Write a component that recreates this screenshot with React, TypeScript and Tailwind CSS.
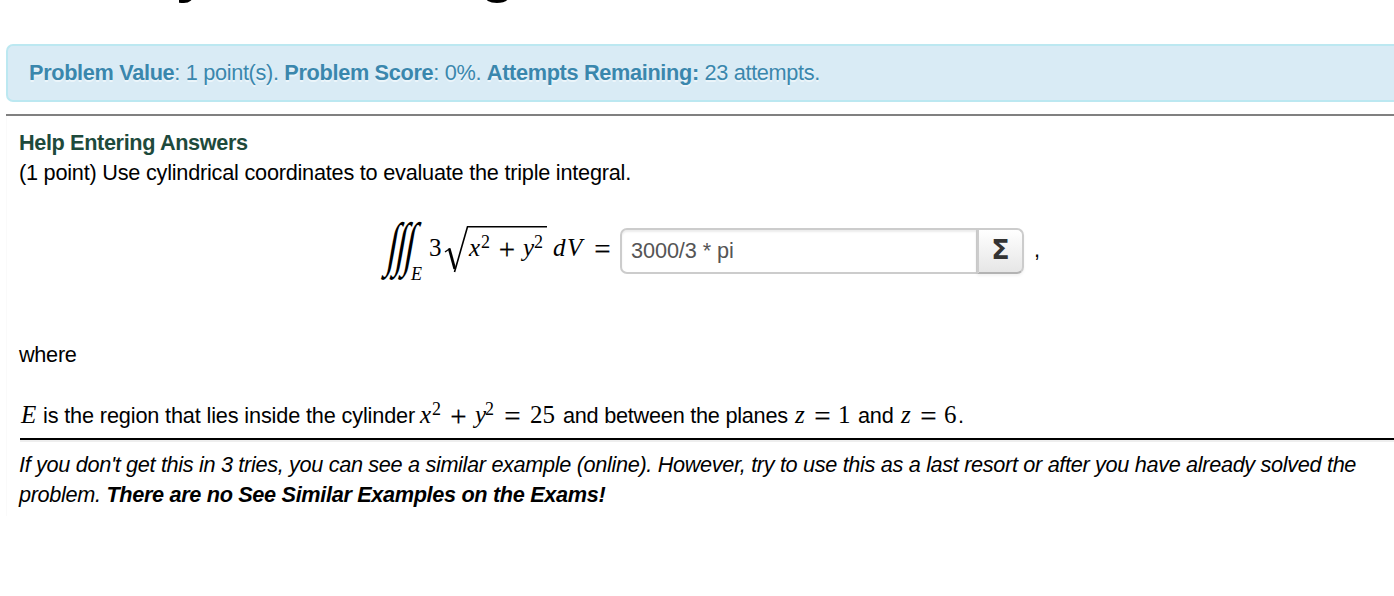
import type { ReactNode } from 'react'

interface MathProps {
    className?: string
    children: ReactNode
}

function Var({ className = '', children }: MathProps) {
    return <span className={`inline-block font-['Liberation_Serif',serif] text-[25px] italic ${className}`}>{children}</span>
}

function Num({ className = '', children }: MathProps) {
    return <span className={`inline-block font-['Liberation_Serif',serif] text-[25px] ${className}`}>{children}</span>
}

function Op({ className = '', children }: MathProps) {
    return <span className={`relative top-[3px] inline-block text-center font-['Liberation_Serif',serif] text-[29px] [-webkit-text-stroke:0.2px_black] ${className}`}>{children}</span>
}

function Sup({ children }: { children: ReactNode }) {
    return <span className="relative -top-[8px] inline-block w-[10px] font-['Liberation_Serif',serif] text-[18px]">{children}</span>
}

function TripleIntegral() {
    return (
        <div className="relative h-[60px] w-[48px]">
            <div className="flex h-[60px] origin-bottom-left [transform:translate(2px,-1px)_skewX(-10deg)_scale(0.7,1.14)] font-['Liberation_Serif',serif] text-[52px] leading-[60px]">
                <span className="w-[12px]">∫</span>
                <span className="w-[12px]">∫</span>
                <span className="w-[12px]">∫</span>
            </div>
            <span className="absolute top-[45px] left-[30px] font-['Liberation_Serif',serif] text-[18px] leading-none italic">E</span>
        </div>
    )
}

function Radical() {
    return (
        <svg className="absolute top-0 left-0" width="103" height="54" viewBox="0 0 103 54" fill="none" stroke="black">
            <path d="M1 32L6 28.5" strokeWidth="1.3" />
            <path d="M5.2 28.5L10.8 49" strokeWidth="2.8" />
            <path d="M10.5 52L23.5 6.8H103" strokeWidth="1.6" />
        </svg>
    )
}

function AnswerInput() {
    return (
        <div className="flex h-[46px]">
            <input
                readOnly
                value="3000/3 * pi"
                className="h-[46px] w-[358px] rounded-l-[7px] border-2 border-[#ccc] bg-white px-[9px] text-[21.7px] tracking-[-0.1px] text-[#555] shadow-[inset_0_2px_2px_rgba(0,0,0,0.075)] outline-none"
            />
            <button className="-ml-px flex h-[46px] w-[47px] items-center justify-center rounded-r-[7px] border-2 border-[#ccc] border-b-[#b3b3b3] bg-linear-to-b from-white to-[#e6e6e6] pb-[3px] shadow-[0_2px_3px_rgba(0,0,0,0.05)]">
                <span className="font-['DejaVu_Sans',sans-serif] text-[27px] leading-none font-bold text-[#333]">Σ</span>
            </button>
        </div>
    )
}

export default function App() {
    return (
        <div className="h-[596px] w-full overflow-hidden bg-white font-['Liberation_Sans',Arial,sans-serif] text-[21.7px] leading-[30px] text-black">
            {/* Bottom edge of the page heading */}
            <div className="relative h-[44px] overflow-hidden font-bold">
                <span className="absolute -top-[61px] left-[176px] text-[58px] leading-[64px]">y</span>
                <span className="absolute -top-[61px] left-[480px] text-[58px] leading-[64px]">g</span>
            </div>

            <div className="ml-[6px] h-[58px] rounded-l-[7px] border-2 border-r-0 border-[#bce8f1] bg-[#d9ebf5] pt-3 pl-[21px] tracking-[-0.32px] whitespace-nowrap text-[#3a87ad] [text-shadow:0_2px_0_rgba(255,255,255,0.5)]">
                <b>Problem Value</b>: 1 point(s). <b>Problem Score</b>: 0%. <b>Attempts Remaining:</b> 23 attempts.
            </div>

            <div className="mt-3 ml-[6px] h-[2px] bg-[#808080]" />

            <div className="ml-[6px] h-[400px] border-l border-[#fafafa] pt-3 pl-3">
                <p className="font-bold tracking-[-0.38px] text-[#1e4a3c]">Help Entering Answers</p>
                <p className="tracking-[-0.23px]">(1 point) Use cylindrical coordinates to evaluate the triple integral.</p>

                <div className="mt-8 flex h-[62px] items-start pl-[362px]">
                    <TripleIntegral />
                    <Num className="w-[15px] pt-[13px]">3</Num>
                    <div className="relative flex h-[54px] w-[103px] items-baseline pt-[11px] pl-[25px]">
                        <Radical />
                        <Var className="w-3">x</Var>
                        <Sup>2</Sup>
                        <Op className="w-8">+</Op>
                        <Var className="w-[11px]">y</Var>
                        <Sup>2</Sup>
                    </div>
                    <Var className="ml-[6px] w-8 pt-[13px] tracking-[1.5px]">dV</Var>
                    <Op className="w-[35px] pt-[11px]">=</Op>
                    <div className="pt-2"><AnswerInput /></div>
                    <span className="ml-[10px] pt-[15px]">,</span>
                </div>

                <p className="mt-[58px] tracking-[-0.3px]">where</p>

                <p className="mt-[28px] flex h-[30px] items-baseline pl-[2px] whitespace-nowrap">
                    <Var className="w-[22px]">E</Var>
                    <span className="w-[377px] tracking-[-0.15px]">is the region that lies inside the cylinder</span>
                    <Var className="w-3">x</Var>
                    <Sup>2</Sup>
                    <Op className="w-[33px]">+</Op>
                    <Var className="w-[10px]">y</Var>
                    <Sup>2</Sup>
                    <Op className="w-[35px]">=</Op>
                    <Num className="w-[33px]">25</Num>
                    <span className="w-[232px] tracking-[-0.25px]">and between the planes</span>
                    <Var className="w-[12px]">z</Var>
                    <Op className="w-[31px]">=</Op>
                    <Num className="w-[20px]">1</Num>
                    <span className="w-[43px] tracking-[-0.2px]">and</span>
                    <Var className="w-[12px]">z</Var>
                    <Op className="w-[31px]">=</Op>
                    <Num className="w-[14px]">6</Num>
                    <span>.</span>
                </p>

                <hr className="mt-[10px] ml-[1px] border-t-2 border-black shadow-[0_2px_0_#eee]" />

                <div className="mt-[10px] tracking-[-0.335px] whitespace-nowrap italic">
                    <p>If you don't get this in 3 tries, you can see a similar example (online). However, try to use this as a last resort or after you have already solved the</p>
                    <p>problem. <b>There are no See Similar Examples on the Exams!</b></p>
                </div>
            </div>
        </div>
    )
}
